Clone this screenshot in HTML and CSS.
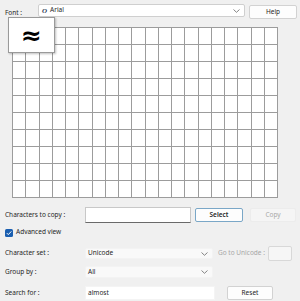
FILE: index.html
```html
<!DOCTYPE html>
<html>
<head>
<meta charset="utf-8">
<link rel="stylesheet" href="styles.css">
</head>
<body>
<div class="app">
  <div class="row row-font">
    <span class="label label-font">Font :</span>
    <div class="select font-select">
      <span class="ot-icon">O</span>
      <span class="select-text">Arial</span>
      <svg class="chev" width="7" height="4" viewBox="0 0 7 4"><path d="M0.5 0.5 L3.5 3.3 L6.5 0.5" fill="none" stroke="#777" stroke-width="0.9"/></svg>
    </div>
    <button class="btn btn-help">Help</button>
  </div>

  <div class="grid-wrap">
    <div class="grid" id="grid"></div>
    <div class="zoom-char">≈</div>
  </div>

  <div class="row row-copy">
    <span class="label label-wide">Characters to copy :</span>
    <div class="input copy-input"></div>
    <button class="btn btn-select">Select</button>
    <button class="btn btn-copy">Copy</button>
  </div>

  <div class="row row-check">
    <span class="checkbox">
      <svg width="8" height="8" viewBox="0 0 8 8"><path d="M1.8 4.1 L3.3 5.6 L6.3 2.4" fill="none" stroke="#fff" stroke-width="1"/></svg>
    </span>
    <span class="label">Advanced view</span>
  </div>

  <div class="row row-charset">
    <span class="label label-wide">Character set :</span>
    <div class="select flat-select">
      <span class="select-text">Unicode</span>
      <svg class="chev" width="7" height="4" viewBox="0 0 7 4"><path d="M0.5 0.5 L3.5 3.3 L6.5 0.5" fill="none" stroke="#777" stroke-width="0.9"/></svg>
    </div>
    <span class="label goto">Go to Unicode :</span>
    <div class="goto-box"></div>
  </div>

  <div class="row row-group">
    <span class="label label-wide">Group by :</span>
    <div class="select flat-select">
      <span class="select-text">All</span>
      <svg class="chev" width="7" height="4" viewBox="0 0 7 4"><path d="M0.5 0.5 L3.5 3.3 L6.5 0.5" fill="none" stroke="#777" stroke-width="0.9"/></svg>
    </div>
  </div>

  <div class="row row-search">
    <span class="label label-wide">Search for :</span>
    <div class="input search-input"><span class="select-text">almost</span></div>
    <button class="btn btn-reset">Reset</button>
  </div>
</div>
<script>
  var g = document.getElementById('grid');
  for (var i = 0; i < 200; i++) {
    var c = document.createElement('div');
    c.className = 'cell';
    g.appendChild(c);
  }
</script>
</body>
</html>
```

FILE: styles.css
```css
html, body {
  margin: 0;
  padding: 0;
  background: #f0f0f0;
}
body {
  width: 300px;
  height: 301px;
  overflow: hidden;
  font-family: "Noto Sans", "Open Sans", "DejaVu Sans", sans-serif;
  font-size: 6.5px;
  color: #262626;
}
.app {
  padding-left: 5px;
  padding-top: 4px;
}
.row {
  display: flex;
  align-items: center;
}
.label {
  white-space: nowrap;
  line-height: 1;
}
.label-font {
  width: 33px;
  align-self: center;
  margin-top: 3px;
}
.label-wide {
  width: 80px;
  flex: none;
}
.row-font {
  height: 15px;
  align-items: flex-start;
}
.select {
  display: flex;
  align-items: center;
  box-sizing: border-box;
  position: relative;
}
.font-select {
  width: 207px;
  height: 13px;
  background: #fff;
  border: 1px solid #cfcfcf;
  border-radius: 2px;
  padding-left: 3px;
}
.ot-icon {
  font-family: "Liberation Serif", serif;
  font-style: italic;
  font-size: 7px;
  color: #2b3b55;
  margin-right: 3px;
  font-weight: bold;
}
.select-text {
  line-height: 1;
}
.chev {
  position: absolute;
  right: 4px;
  top: 50%;
  margin-top: -2px;
}
.btn {
  box-sizing: border-box;
  font-family: inherit;
  font-size: 6.5px;
  background: #fdfdfd;
  border: 1px solid #d2d2d2;
  border-radius: 2px;
  color: #262626;
  padding: 0;
  line-height: 1;
  flex: none;
}
.btn-help {
  width: 48px;
  height: 14px;
  margin-left: 4px;
  margin-top: 1px;
}
.grid-wrap {
  position: relative;
  margin-top: 8px;
  margin-left: 7px;
  width: 266px;
  height: 171px;
}
.grid {
  box-sizing: border-box;
  width: 266px;
  height: 171px;
  display: grid;
  grid-template-columns: repeat(20, 1fr);
  grid-template-rows: repeat(10, 1fr);
  border-left: 1px solid #9c9c9c;
  border-top: 1px solid #9c9c9c;
  background: #fff;
}
.cell {
  border-right: 1px solid #9c9c9c;
  border-bottom: 1px solid #9c9c9c;
}
.zoom-char {
  position: absolute;
  left: -4px;
  top: -10px;
  width: 47px;
  height: 36px;
  box-sizing: border-box;
  background: #fff;
  border: 1px solid #9a9a9a;
  box-shadow: 1px 1px 2px rgba(0,0,0,0.25);
  display: flex;
  align-items: center;
  justify-content: center;
  font-family: "DejaVu Sans", sans-serif;
  font-weight: bold;
  font-size: 25px;
  color: #000;
  line-height: 1;
}
.row-copy {
  margin-top: 9px;
  height: 16px;
}
.input {
  box-sizing: border-box;
  background: #fff;
  border: 1px solid #c8c8c8;
  border-bottom-color: #6a6a6a;
  display: flex;
  align-items: center;
  padding-left: 4px;
  flex: none;
}
.copy-input {
  width: 106px;
  height: 16px;
}
.btn-select {
  width: 48px;
  height: 14px;
  margin-left: 4px;
  border-color: #7aa7c7;
  font-weight: 600;
}
.btn-copy {
  width: 46px;
  height: 14px;
  margin-left: 7px;
  background: #f5f5f5;
  border-color: #ececec;
  color: #a8a8a8;
}
.row-check {
  margin-top: 5px;
  height: 9px;
}
.checkbox {
  width: 8px;
  height: 8px;
  background: #1b5fb0;
  border-radius: 1.5px;
  margin-right: 3px;
  display: flex;
}
.row-charset {
  margin-top: 9px;
  height: 15px;
}
.flat-select {
  width: 128px;
  height: 11px;
  background: #f9f9f9;
  border: 1px solid #f3f3f3;
  border-radius: 2px;
  padding-left: 2px;
  flex: none;
}
.goto {
  color: #a6a6a6;
  margin-left: 5px;
}
.goto-box {
  box-sizing: border-box;
  width: 24px;
  height: 15px;
  margin-left: 3px;
  background: #f6f6f6;
  border: 1px solid #d8d8d8;
  border-radius: 2px;
}
.row-group {
  margin-top: 5px;
  height: 12px;
}
.row-group .flat-select {
  height: 12px;
}
.row-search {
  margin-top: 8px;
  height: 14px;
}
.search-input {
  width: 130px;
  height: 14px;
  border-color: #f4f4f4;
  border-bottom-color: #f4f4f4;
  padding-left: 2px;
}
.btn-reset {
  width: 46px;
  height: 14px;
  margin-left: 12px;
}
```
